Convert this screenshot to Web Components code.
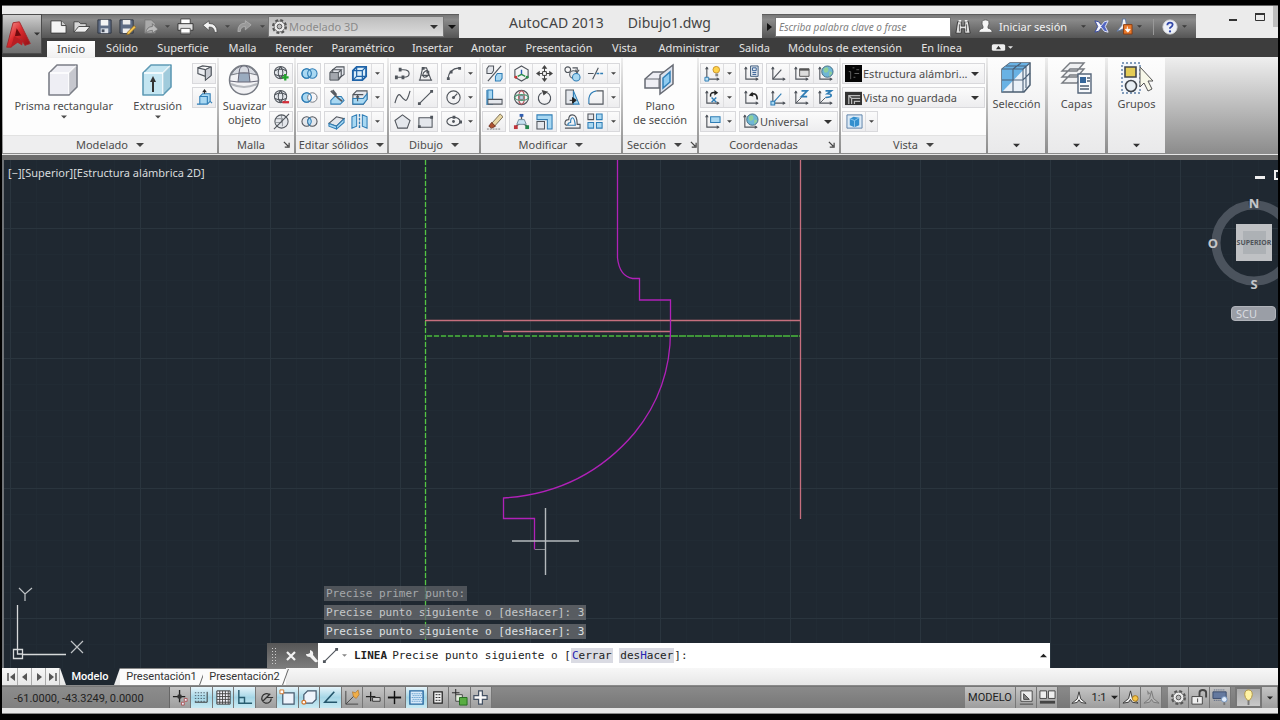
<!DOCTYPE html>
<html lang="es">
<head>
<meta charset="utf-8">
<title>AutoCAD 2013 - Dibujo1.dwg</title>
<style>
  html, body { margin: 0; height: 100%; background: #000; }
  body { font: 11px/14px "Noto Sans", "Open Sans", sans-serif; color: #4c4c4c; overflow: hidden; }
</style>
</head>
<body>
<cad-app></cad-app>
<script>
const K = 'fill="none" stroke="#50555c" stroke-width="1.2"';
const B = 'fill="none" stroke="#2f7db5" stroke-width="1.2"';
const F = 'fill="#a9d8f2" stroke="#2f7db5" stroke-width="1.1"';
const G = 'fill="#e4e7ec" stroke="#50555c" stroke-width="1.1"';
const AXES = `<path d="M3 2v13h13" ${K}/><path d="M1 4.500l2-3 2 3zM13.500 13l3 2-3 2z" fill="#50555c"/>`;
const BALL = `<circle cx="8" cy="8" r="6.500" ${G}/><path d="M2 6q6-3 12 0M2 10q6 3 12 0M8 1.500q-5 6.500 0 13M8 1.500q5 6.500 0 13" ${K}/>`;
const GLOBE = `<circle cx="11" cy="7" r="6" fill="#6fb6d6" stroke="#406a80"/><path d="M7 4q4-3 5 0t-2 4q-3 1-3-4zM13 7q3-1 3 2l-3 3z" fill="#8fcf9a"/>`;
const CUBE = (s, f) => `<path d="M2 10l8-8h20v22l-8 8H2z" fill="${f}" stroke="${s}" stroke-width="1.6" stroke-linejoin="round"/><path d="M3 10h19v21M22 10l7-7" fill="none" stroke="#fff" stroke-width="1.500"/><path d="M22 10l8-8v22l-8 8z" fill="${s}" opacity=".35"/>`;
const LAYOUT_A = '<path d="M8 1l2 8 6 5-6-1-2-3-2 3-6 1 6-5z" transform="translate(1 1)"';

/* Drawings keyed by name: [viewBox size, markup]. */
const ICONS = {
  caret: [8, '<path d="M0 2h8l-4 4z" fill="currentColor"/>'],
  up: [8, '<path d="M0 6h8l-4-4z" fill="currentColor"/>'],
  right: [8, '<path d="M2 0l5 4-5 4z" fill="currentColor"/>'],
  launcher: [8, '<path d="M1 1l5 5M7 2v5h-5" fill="none" stroke="currentColor" stroke-width="1.4"/>'],
  logo: [32, '<defs><linearGradient id="r" x1="0" y1="0" x2="1" y2="1"><stop stop-color="#f79a96"/><stop offset=".45" stop-color="#dc2b2e"/><stop offset="1" stop-color="#8d0d12"/></linearGradient></defs><path d="M3 30L10 3l7-1 12 24-6 2-4-7-9 3-2 6z" fill="url(#r)" stroke="#a3282b"/><path d="M12 18l2-9 5 8z" fill="#6e0b0e"/><path d="M8 30l3-12 10 5-1 5-5-3z" fill="#b81d22"/>'],
  new: [18, '<path d="M1 3h11l5 5v8H1z" fill="#f4f4f4" stroke="#3d3d3d"/><path d="M12 3v5h5" fill="#ccc" stroke="#3d3d3d"/>'],
  open: [18, '<path d="M1 15V4h5l2 2h6v3" fill="#d7d7d7" stroke="#444"/><path d="M1 15l5-6h12l-5 6z" fill="#eee" stroke="#444"/>'],
  save: [18, '<path d="M2 2h14v14H2z" fill="#5f6d85" stroke="#2f3542"/><path d="M5 2h8v6H5z" fill="#f4f4f4"/><path d="M5 11h8v5H5z" fill="#dfe3ea"/><path d="M6 12h3v3H6z" fill="#454c5a"/>'],
  saveas: [18, '<path d="M1 2h14v14H1z" fill="#5f6d85" stroke="#2f3542"/><path d="M4 2h8v5H4zM4 11h8v5H4z" fill="#eee"/><path d="M9 15l7-7 2 2-7 7-3 1z" fill="#f2c14e" stroke="#7a5a20" stroke-width=".7"/>'],
  export: [18, '<path d="M3 2h7l4 4v10H3z" fill="#aaa" stroke="#777"/><path d="M4 16q1-7 7-7V6l6 6-6 4v-3q-4 0-7 3z" fill="#bbb" stroke="#777"/>'],
  print: [18, '<path d="M4 1h10v6H4zM4 11h10v6H4z" fill="#fff" stroke="#444"/><path d="M1 6h16v7H1z" fill="#e1e1e1" stroke="#333"/><path d="M4 11h10v5H4z" fill="#fff" stroke="#555"/>'],
  undo: [18, '<path d="M1 7l7-5v3q9 0 9 10h-3q0-6-6-6v4z" fill="#f2f2f2" stroke="#444" stroke-width=".8"/>'],
  redo: [18, '<path d="M17 7l-7-5v3Q1 5 1 15h3q0-6 6-6v4z" fill="#999" stroke="#bbb" stroke-width=".8"/>'],
  gear: [18, '<circle cx="9" cy="9" r="6.700" fill="none" stroke="#555" stroke-width="2.500" stroke-dasharray="3 2.260"/><circle cx="9" cy="9" r="5.700" fill="#ececec" stroke="#666"/><circle cx="9" cy="9" r="2.500" fill="#bbb" stroke="#555"/>'],
  binoculars: [18, '<path d="M3 3h4v5h4V3h4l2 13h-6v-5H7v5H1z" fill="#e2e2e2" stroke="#333"/><path d="M4 2h3M11 2h3" stroke="#eee" stroke-width="2"/><path d="M5 6v8M13 6v8" stroke="#555"/>'],
  user: [18, '<path d="M1 16q0-4 5-5V9Q4 6 5 3q1-2 4-2t4 2q1 3-1 6v2q5 1 5 5z" fill="#f5f5f5" stroke="#555"/>'],
  exchange: [18, '<path d="M2 3l4 1 4 5-4 5-4 1 3-6z" fill="#f4f6ff" stroke="#33459c"/><path d="M16 3l-4 1-4 5 4 5 4 1-3-6z" fill="#5366c2" stroke="#e8ebff"/>'],
  apps: [18, '<path d="M7 1h3l1 6-4 5-6 2 5-6z" fill="#f2f2f2" stroke="#6078a5"/><path d="M8 7h9v10H8z" fill="#e9792b" stroke="#863c10"/><path d="M12 9v4M10 12l2.500 3 2.500-3z" fill="#fff" stroke="#fff"/>'],
  help: [18, '<circle cx="9" cy="9" r="8" fill="#eef1f8" stroke="#d9d9d9"/><path d="M6 7q0-3 3-3t3 2.500Q12 8 9 10v1" fill="none" stroke="#3147a8" stroke-width="2"/><circle cx="9" cy="14" r="1.300" fill="#3147a8"/>'],
  box: [34, CUBE('#7b7e87', '#eeeef4')],
  extrude: [34, CUBE('#5f9ab5', '#c4e5f1') + '<path d="M12 29V17" stroke="#333" stroke-width="2"/><path d="M9 19l3-6 3 6z" fill="#333"/>'],
  smooth: [34, '<circle cx="16" cy="17" r="14.500" fill="#f1f1f4" stroke="#777b84" stroke-width="1.500"/><path d="M3 12q5-9 13-9t13 9q-13-4-26 0" fill="#d8dbe2" stroke="#777b84"/><path d="M11 10h10l1 9H10z" fill="#9aabbf" stroke="#667"/><path d="M10 19l-8-1M22 19l8-1M11 10q0-5 3-7M21 10q0-5-3-7" fill="none" stroke="#667"/><path d="M3 21q13 6 26 0" fill="none" stroke="#b4b7bd" stroke-width="2"/>'],
  section: [34, '<path d="M2 16l8-7h12v16H2z" fill="#eeeef4" stroke="#666a73" stroke-width="1.500"/><path d="M2 16h14v9M16 16l6-7" fill="none" stroke="#666a73"/><path d="M17 12l13-10v19L17 31z" fill="#dde3ee" stroke="#666a73" stroke-width="1.500"/><path d="M20 15l7-6v10l-7 6z" fill="#8fcbf0" stroke="#3180b8" stroke-width="1.500"/>'],
  polysolid: [18, '<path d="M2 3l8 2v7l-8-3z" fill="#eceef2" stroke="#50555c" stroke-width="1.200"/><path d="M2 3l5-2 9 1v9l-6 5v-4M10 5l6-3M10 5v11" fill="none" stroke="#50555c" stroke-width="1.200"/><path d="M10 5l6-3v9l-6 5z" fill="#c9ccd3" stroke="#50555c"/>'],
  presspull: [18, `<path d="M4 8l3-3h8v8l-3 3H4z" ${F}/><path d="M4 8h8v8M1 16h3M15 13l2 2" ${B}/><path d="M9 5V2" stroke="#222"/><path d="M6.500 3.500L9 0l2.500 3.500z" fill="#222"/>`],
  meshadd: [18, BALL + '<path d="M13 9.500v7M9.500 13h7" stroke="#22a32c" stroke-width="2.400"/>'],
  meshdel: [18, BALL + '<path d="M10 14h7" stroke="#d32c38" stroke-width="2.400"/>'],
  meshno: [18, `<circle cx="9" cy="9" r="7" ${G}/><path d="M3 6h7v8M9 2v8H3" ${K} opacity=".5"/><path d="M1 17L17 1" ${K}/>`],
  union: [18, `<circle cx="6" cy="9" r="5" ${F}/><circle cx="12" cy="9" r="5" ${F}/><circle cx="6" cy="9" r="5" ${B}/>`],
  subtract: [18, `<circle cx="6" cy="9" r="5" ${F}/><circle cx="12" cy="9" r="5" fill="#f5f5f8" stroke="#70757d"/><circle cx="6" cy="9" r="5" ${B}/>`],
  intersect: [18, `<circle cx="6" cy="9" r="5" ${G}/><circle cx="12" cy="9" r="5" ${G}/><path d="M9 5q-4 4 0 8q4-4 0-8" ${F}/>`],
  imprint: [18, `<path d="M5 5l4-3h8v8l-4 3H5z" ${G}/><path d="M2 8h9v8H2z" fill="#a3a7ae" stroke="#50555c"/><path d="M2 8l3-3h9l-3 3M14 5v7l-3 4" ${K}/>`],
  edges: [18, '<path d="M2 6l4-4h10v10l-4 4H2z" fill="#dbeefa" stroke="#1f63a8" stroke-width="2"/><path d="M2 6h10v10M12 6l4-4M6 2v10h10M6 12l-4 4" fill="none" stroke="#1f63a8" stroke-width="1.300"/>'],
  slice: [18, `<path d="M3 12l4-4h7l3 4-4 4H3z" ${F}/><path d="M3 2l8 8M5 1l4 5M11 10l4 3" stroke="#565a61" stroke-width="1.800"/>`],
  thicken: [18, `<path d="M2 6l4-4h11v9l-4 5H2z" ${G}/><path d="M2 10h11l4-5v6l-4 5H2z" ${F}/><path d="M2 6h11M7 8v5M5.500 9l1.500-2 1.500 2" ${K}/>`],
  face: [18, `<path d="M1 11l8-7 8 2-8 8z" ${G}/><path d="M1 11l8 3v3l-8-3zM9 14l8-8v4l-8 7z" ${F}/>`],
  mirror3: [18, `<path d="M1 4l5-2v12l-5 2zM17 4l-5-2v12l5 2z" ${F}/><path d="M9 1v16" stroke="#2f7db5" stroke-width="1.500" stroke-dasharray="3 1"/>`],
  polyline: [18, `<path d="M2 13h8q6 0 6-4t-6-4H7" ${K} stroke-width="1.500"/><path d="M1 11h3v4H1zM8 11h3v4H8zM5 3h3v4H5z" fill="#50555c"/>`],
  presspoly: [18, `<path d="M2 16h14M3 16l3-13h4l5 13M5 11h8M7 8q4-4 5 0t-4 5q-3-1-1-5" ${K}/><path d="M5 2h3v3H5zM10 6h3v3h-3z" fill="#50555c"/>`],
  arc: [18, `<path d="M3 15Q4 4 15 3" ${K}/><path d="M2 13h3v3H2zM5 6h3v3H5zM14 2h3v3h-3z" fill="#50555c"/>`],
  spline: [18, `<path d="M1 15Q4 3 7 7t5 5 5-10" ${K} stroke-width="1.500"/>`],
  line: [18, `<path d="M3 15L15 3" ${K}/><path d="M1 14h3v3H1zM14 1h3v3h-3z" fill="#50555c"/>`],
  circle: [18, `<circle cx="9" cy="9" r="7" ${K}/><path d="M9 9l4-4" ${K}/><circle cx="9" cy="9" r="1.600" fill="#50555c"/>`],
  polygon: [18, `<path d="M9 2l8 6-3 8H4L1 8z" ${G}/>`],
  rect: [18, `<path d="M2 5h14v10H2z" ${G}/><path d="M1 13h3v3H1zM14 3h3v3h-3z" fill="#50555c"/>`],
  ellipse: [18, `<ellipse cx="9" cy="9" rx="7" ry="4.500" ${K}/><circle cx="9" cy="9" r="1.500" fill="#50555c"/><path d="M8 3h3v3H8zM15 8h3v3h-3z" fill="#50555c"/>`],
  modall: [18, `<path d="M3 1h5v5l-2 3H1V4z" ${G}/><path d="M2 17L16 1" ${K}/><path d="M12 9h5v5l-2 3h-5v-5z" ${F}/>`],
  move3: [18, `<path d="M9 1l7 4v8l-7 4-7-4V5z" ${K}/><path d="M9 10V5" stroke="#2c5fb8" stroke-width="1.500"/><path d="M9 10l-4 2M9 10l4 2" stroke="#2b8c4a" stroke-width="1.500"/><circle cx="3" cy="13" r="1.500" fill="#c33"/><circle cx="15" cy="13" r="1.500" fill="#2b8c4a"/>`],
  move: [18, '<path d="M9 3v12M3 9h12" stroke="#333"/><path d="M9 0l3 4H6zM9 18l3-4H6zM0 9l4-3v6zM18 9l-4-3v6z" fill="#444"/><path d="M7 7h4v4H7z" fill="#fff" stroke="#333"/>'],
  copy: [18, `<circle cx="4" cy="5" r="3" ${K}/><circle cx="10" cy="10" r="4" ${G}/><circle cx="13" cy="13" r="4" ${F}/><path d="M9 3h5v3M12 5l2 3 2-3" ${K}/>`],
  trim: [18, `<path d="M1 9h6M12 3L6 15" ${K}/><path d="M10 9h8" stroke="#2f7db5" stroke-width="1.500" stroke-dasharray="3 1"/>`],
  align: [18, `<path d="M2 1h5v15H2z" ${F}/><path d="M2 11h15v5H2z" ${G}/><path d="M1 1v16" ${B}/>`],
  rotate3: [18, `<circle cx="9" cy="9" r="7.500" ${K}/><ellipse cx="9" cy="9" rx="3" ry="7" fill="none" stroke="#b85e66" stroke-width="1.300"/><ellipse cx="9" cy="9" rx="7" ry="3" fill="none" stroke="#4f9a77" stroke-width="1.300"/><path d="M7 7h4v4H7z" fill="#b8d5e8" stroke="#777"/>`],
  rotate: [18, `<path d="M6 4a6.500 6.500 0 1 0 6 0" ${K} stroke-width="1.600"/><path d="M6 1l7 2-5 4z" fill="#444"/>`],
  mirror: [18, `<path d="M2 1h8v15H2z" ${G}/><path d="M10 2l6 14h-6z" ${F}/><path d="M6 12h5M9 9l4 3-4 3z" fill="#222" stroke="#222"/>`],
  fillet: [18, `<path d="M2 16V10Q3 3 10 2" ${B}/><path d="M10 2h7v14H2" ${K}/>`],
  erase: [18, '<path d="M1 17h15" stroke="#777" stroke-dasharray="2 1"/><path d="M6 11L15 1l3 3-9 10z" fill="#e9d8a6" stroke="#76684b"/><path d="M6 10l4 4-4 2-3-2z" fill="#ae5230" stroke="#733322"/>'],
  scale3: [18, '<path d="M9 2v8l-6 4M9 10l6 4" fill="none" stroke="#555" stroke-width="1.400"/><path d="M6 7h6l2 5H4z" fill="#c7e3f2" stroke="#718c9b"/><path d="M7 1h4v3H7z" fill="#315fb0"/><path d="M1 13h4v4H1z" fill="#bf343b"/><path d="M13 13h4v4h-4z" fill="#23864c"/>'],
  scale: [18, `<path d="M1 2h16v15h-5V7H1z" ${F}/><path d="M1 9h8v8H1z" ${G}/>`],
  offset: [18, `<path d="M1 16h16v-4h-3q0-10-5-10-4 0-4 5-4 0-4 4 0 2 3 2" ${K} stroke-width="1.500"/><path d="M4 13h8q-1-8-3-8t-2 5q-3 0-3 3" ${B} stroke-width="1.500"/>`],
  array: [18, `<path d="M1 1h6v6H1z" ${G}/><path d="M10 1h6v6h-6zM1 10h6v6H1zM10 10h6v6h-6z" ${F}/>`],
  ucslamp: [18, AXES + '<path d="M1 13h4v4H1z" fill="#bde2f5" stroke="#2f7db5"/><circle cx="13" cy="5" r="3.500" fill="#ffd34a" stroke="#c9932e"/><path d="M12 9h3v3h-3z" fill="#888"/>'],
  ucsx: [18, AXES + '<path d="M7 8q-1-5 5-4" fill="none" stroke="#222" stroke-width="1.600"/><path d="M11 1l4 3-4 3z" fill="#222"/><path d="M8 9l5 5M13 9l-5 5" stroke="#2f7db5" stroke-width="1.500"/>'],
  ucsview: [18, AXES + `<path d="M7 4h10v6H7z" ${F}/>`],
  ucslist: [18, AXES + '<path d="M8 1h8v11H8z" fill="#e3e9f1" stroke="#3c5878"/><path d="M10 3h4v3h-4zM10 8h4M10 10h4" fill="none" stroke="#315b92"/>'],
  ucs: [18, AXES + `<path d="M3 15l9-10" ${K}/>`],
  ucswin: [18, AXES + '<path d="M7 4h10v8H7z" fill="#ddd" stroke="#555"/><path d="M7 4h10v2H7z" fill="#555"/>'],
  ucsworld: [18, AXES + GLOBE],
  ucsback: [18, AXES + '<path d="M8 6q7-3 7 5" fill="none" stroke="#222" stroke-width="1.700"/><path d="M6 7l4-4 1 5z" fill="#222"/>'],
  ucsorigin: [18, AXES + `<path d="M3 15l9-10" ${B}/><path d="M1 13h4v4H1z" ${F}/>`],
  ucsz: [18, AXES + '<path d="M9 2h6l-6 6h6" fill="none" stroke="#2f7db5" stroke-width="1.800"/><path d="M3 15l6-6" stroke="#50555c"/>'],
  ucs3: [18, AXES + '<path d="M9 2h6l-4 3q4 0 4 2t-6 2" fill="none" stroke="#2f7db5" stroke-width="1.800"/><path d="M3 15l6-6" stroke="#50555c"/>'],
  wire: [18, '<path d="M0 0h18v18H0z" fill="#050505"/><path d="M8 3h2M4 7h2v8M10 9h5M9 13h2M12 5h3" fill="none" stroke="#666"/>'],
  views: [18, '<path d="M0 3h18v14H0z" fill="#333"/><path d="M4 16V7h12M7 16v-6h9M10 16v-3h6M4 7l3 3" fill="none" stroke="#bbb" stroke-width="1.300"/>'],
  viewcube: [18, '<path d="M1 2h16v14H1z" fill="#dceaf6" stroke="#5b7fa7"/><path d="M4 6l4-2 6 1v8l-5 2-5-2z" fill="#348fce"/><path d="M4 6l5 2v7M9 8l5-3" fill="none" stroke="#8cc8ee"/>'],
  selection: [34, '<path d="M2 8l8-6h20v22l-6 7H2z" fill="#eaf1f8" stroke="#4b5d70" stroke-width="1.500"/><path d="M2 8l8-6h20L2 31z" fill="#69b2e4"/><path d="M2 8h21v23M23 8l7-6M13 8v23M2 19h21l7-7M13 8l8-6M6 5h20v22" fill="none" stroke="#4b6178" stroke-width="1.100"/>'],
  layers: [34, '<path d="M2 22h15l7-8H10zM2 16h15l7-8H10zM2 10h15l7-8H10z" fill="#f0f1f3" stroke="#777b81" stroke-width="1.400"/><path d="M18 13h13v19H18z" fill="#f7f9fc" stroke="#556579" stroke-width="1.400"/><path d="M20 16h6v6h-6z" fill="#34659a"/><path d="M27 17h3M27 20h3M20 25h9M20 28h9" stroke="#4d5d72" stroke-width="1.400"/>'],
  groups: [34, '<path d="M2 2h18v30H2z" fill="#f2f6fb" stroke="#5c7ea5" stroke-width="1.400" stroke-dasharray="2 2"/><path d="M5 6h11v10H5z" fill="#e4cc55" stroke="#40454c" stroke-width="1.600"/><circle cx="11" cy="25" r="5.500" fill="#e6edf3" stroke="#40454c" stroke-width="1.600"/><path d="M20 6v20l4-4 4 8 4-2-4-8h5z" fill="#f7f8e9" stroke="#555"/>'],
  first: [12, '<path d="M3 2v8" stroke="#555" stroke-width="1.500"/><path d="M10 2v8L5 6z" fill="#555"/>'],
  prev: [12, '<path d="M8 2v8L3 6z" fill="#555"/>'],
  next: [12, '<path d="M4 2v8l5-4z" fill="#555"/>'],
  last: [12, '<path d="M9 2v8" stroke="#555" stroke-width="1.500"/><path d="M2 2v8l5-4z" fill="#555"/>'],
  close: [12, '<path d="M2 2l8 8M10 2l-8 8" stroke="#f2f2f2" stroke-width="2.200"/>'],
  wrench: [14, '<path d="M1 5q0 3 4 3l5 5q2 1 3-1L8 6q1-4-3-5v3L3 5z" fill="#f2f2f2"/>'],
  infer: [18, '<path d="M1 8h13M8 1v13" stroke="#222" stroke-width="1.400"/><circle cx="8" cy="8" r="2.500" fill="#333"/><path d="M13 10h3v3h-3zM10 14h3v3h-3z" fill="#eef" stroke="#a55"/>'],
  snap: [18, '<path d="M2 4h11M2 7h11M2 10h11M2 13h11" stroke="#4a5c68" stroke-dasharray="1.500 1.500"/><path d="M15 3v11H2" fill="none" stroke="#333"/>'],
  grid: [18, '<path d="M2 2h14v14H2z" fill="#f8f8ff" stroke="#333"/><path d="M5 2v14M8 2v14M11 2v14M14 2v14M2 5h14M2 8h14M2 11h14M2 14h14" stroke="#444"/>'],
  ortho: [18, '<path d="M3 1v14h14M3 9h6v6" fill="none" stroke="#285d70" stroke-width="1.500"/>'],
  polar: [18, '<path d="M12 6a5 5 0 1 0 2 4M5 13l8-8M9 9h7" fill="none" stroke="#333" stroke-width="1.300"/>'],
  osnap: [18, '<path d="M4 4h12v12H4z" fill="#eef3fb" stroke="#44596e" stroke-width="1.300"/><path d="M1 1h4v4H1z" fill="#fff" stroke="#d0762f"/>'],
  osnap3: [18, '<path d="M3 6l4-4h9v9l-4 4H3z" fill="#eef3fb" stroke="#44596e" stroke-width="1.300"/><circle cx="3" cy="14" r="2" fill="#fff" stroke="#d0762f" stroke-width="1.300"/>'],
  otrack: [18, '<path d="M13 3L3 14h13" fill="none" stroke="#24566c" stroke-width="1.700"/>'],
  ducs: [18, '<path d="M3 2v14h13M3 16L12 7" fill="none" stroke="#444"/><path d="M10 3l3 1 3-3 1 5-3 4-3-2z" fill="#f0ae49" stroke="#a86b20" stroke-width=".6"/>'],
  dyn: [18, '<path d="M1 8h10M6 3v10" stroke="#222" stroke-width="1.400"/><path d="M8 9h8v4H8z" fill="#ccc" stroke="#333"/>'],
  lwt: [18, '<path d="M2 9h14" stroke="#111" stroke-width="2"/><path d="M9 2v14" stroke="#111" stroke-width="1.500"/>'],
  transp: [18, '<path d="M2 2h14v14H2z" fill="#d8eafa" stroke="#2768a0" stroke-width="1.500"/><path d="M4 5h11M5 7h10M4 9h11M5 11h10M4 13h11" stroke="#3c84bd" stroke-dasharray="1 1"/>'],
  quick: [18, '<path d="M5 3h9v12H5z" fill="#eee" stroke="#222" stroke-width="1.300"/><path d="M7 6h5M7 9h5M7 12h5" stroke="#222" stroke-dasharray="2 1"/>'],
  cycle: [18, '<path d="M1 4h8M5 0v8" stroke="#222"/><path d="M5 6h7v7H5z" fill="#dfead9" stroke="#444"/><path d="M9 9h8v8H9z" fill="#59ad42" stroke="#246c20"/>'],
  plus: [18, '<path d="M7 2h4v5h5v4h-5v5H7v-5H2V7h5z" fill="#fafafa" stroke="#445264" stroke-width="1.300"/>'],
  model: [18, '<path d="M3 2h12v11H3z" fill="#eee" stroke="#444"/><path d="M6 5v6h6zM2 16h14" fill="#888" stroke="#444"/>'],
  layouts: [18, '<path d="M1 2h7v8H1zM10 2h7v8h-7z" fill="#eee" stroke="#444"/><path d="M1 14h16" stroke="#444" stroke-width="3"/>'],
  anno: [18, LAYOUT_A + ' fill="#f3f3f3" stroke="#333"/>'],
  annolamp: [18, LAYOUT_A + ' fill="#f3f3f3" stroke="#333"/><circle cx="14" cy="10" r="3" fill="#f6c548" stroke="#a37722"/>'],
  annoauto: [18, LAYOUT_A + ' fill="#b5b5b5" stroke="#777"/><path d="M4 1l4 4-3 1z" fill="#888"/>'],
  lock: [18, '<path d="M1 8h11v8H1z" fill="#efefef" stroke="#444"/><path d="M9 8V4q0-3 3.500-3T16 4v5" fill="none" stroke="#444" stroke-width="2"/><path d="M7 10v4" stroke="#444"/>'],
  hardware: [18, '<path d="M1 3h14v7H1z" fill="#64799f" stroke="#394a6b"/><path d="M2 12h9M2 1h12" stroke="#48597b" stroke-dasharray="1 1"/><circle cx="13" cy="11" r="3" fill="#dfecfc" stroke="#6b8cb8"/><path d="M12 14h2v3h-2z" fill="#777"/>'],
  bulb: [18, '<path d="M5 6q0-5 4-5t4 5q0 3-3 6H8Q5 9 5 6z" fill="#fff3a4" stroke="#b19643"/><path d="M8 12h2v5H8z" fill="#777"/>'],
  ribbonmin: [18, '<path d="M3 5h12q2 0 2 2v4q0 2-2 2H3q-2 0-2-2V7q0-2 2-2z" fill="#eee"/><path d="M6 11l3-4 3 4z" fill="#333"/>']
};

const icon = (name, size) => {
  const [box, body] = ICONS[name];
  return `<svg width="${size || box}" height="${size || box}" viewBox="0 0 ${box} ${box}" aria-hidden="true">${body}</svg>`;
};

const BASE = `
  :host, *, *::before, *::after { box-sizing: border-box; }
  svg { display: block; flex: none; }
  button, select, input { font: inherit; color: inherit; margin: 0; padding: 0; border: 0; background: none; border-radius: 0; outline: 0; }
  button { display: flex; align-items: center; justify-content: center; }
  select { appearance: none; }
`;

class CadElement extends HTMLElement {
  connectedCallback() {
    if (this.shadowRoot) return;
    this.attachShadow({ mode: 'open' }).innerHTML = `<style>${BASE}${this.css()}</style>${this.html()}`;
  }
  attr(name, fallback = '') { return this.getAttribute(name) || fallback; }
}
const define = (tag, css, html) => customElements.define(tag, class extends CadElement {
  css() { return css; }
  html() { return html(this); }
});

define('tool-group', `
  :host { display: flex; flex: none; height: 21px; border: 1px solid #d9d9dc; background: linear-gradient(#fbfbfb, #ededef); }
  button { width: 24px; }
  button:first-of-type { width: 22px; }
  button + button { border-left: 1px solid #dedee0; }
  button.drop { width: 12px; color: #444; }
`, el => el.attr('icons').split(' ').map(n => n === '+'
  ? `<button class="drop" aria-label="Más opciones">${icon('caret', 5)}</button>`
  : `<button aria-label="${n}">${icon(n, 17)}</button>`).join(''));

define('cad-select', `
  :host { display: flex; align-items: center; flex: 1; min-width: 0; height: 21px; padding: 0 5px 0 2px; border: 1px solid #d9d9dc; background: linear-gradient(#fbfbfb, #ededef); }
  :host([large]) { height: 21px; flex: none; width: 176px; color: #8a8a8a; background: linear-gradient(#bdbdbd, #dcdcdc); border-color: #777; }
  select { flex: 1; min-width: 0; height: 100%; padding-left: 1px; text-overflow: ellipsis; }
  .caret { color: #333; }
`, el => `${icon(el.attr('icon'), 17)}<select aria-label="${el.attr('label')}"><option>${el.attr('value')}</option></select><span class="caret">${icon('caret', 8)}</span>`);

define('big-tool', `
  :host { display: block; width: var(--tool-width); }
  button { width: 100%; flex-direction: column; line-height: 14px; }
  .label { margin-top: 2px; display: block; white-space: pre-line; }
  .caret { margin-top: 1px; }
`, el => `<button>${icon(el.attr('icon'), 34)}<span class="label">${el.attr('label').replace('|', '<br>')}</span>${el.hasAttribute('drop') ? `<span class="caret">${icon('caret', 6)}</span>` : ''}</button>`);

define('ribbon-panel', `
  :host { display: flex; flex-direction: column; flex: none; width: var(--panel-width); background: #fdfdfd; }
  .body { flex: 1; display: flex; padding: 5px 1px 0; min-height: 0; }
  .foot { display: flex; align-items: center; justify-content: center; height: 18px; background: #eeeeef; border-top: 1px solid #e2e2e2; color: #4c4c4c; gap: 8px; }
  .foot button { color: #444; height: 16px; }
  .launch { margin-left: auto; margin-right: 4px; }
  .foot.both { justify-content: flex-start; padding-left: 4px; }
  .foot.launchonly { padding-left: 8px; }
  .foot.launchonly .title { margin-left: auto; }
`, el => {
  const menu = el.hasAttribute('menu'), launch = el.hasAttribute('launcher');
  return `<div class="body"><slot></slot></div><div class="foot ${menu && launch ? 'both' : launch ? 'launchonly' : ''}"><span class="title">${el.attr('label')}</span>${menu ? `<button aria-label="Desplegar ${el.attr('label')}">${icon('caret', 8)}</button>` : ''}${launch ? `<button class="launch" aria-label="Opciones de ${el.attr('label')}">${icon('launcher', 7)}</button>` : ''}</div>`;
});

define('folded-panel', `
  :host { display: flex; flex: none; width: 57px; background: linear-gradient(#fdfdfd, #e9e9ea); }
  button { flex: 1; flex-direction: column; justify-content: flex-start; padding-top: 3px; }
  .label { margin-top: 2px; }
  .caret { margin-top: 31px; color: #333; }
`, el => `<button>${icon(el.attr('icon'), 34)}<span class="label">${el.attr('label')}</span><span class="caret">${icon('caret', 7)}</span></button>`);

define('tool-column', `
  :host { display: flex; flex-direction: column; gap: 3px; flex: none; }
  :host([wide]) { flex: 1; }
  ::slotted(div) { display: flex; gap: 3px; }
`, () => '<slot></slot>');

define('cad-ribbon', `
  :host { display: flex; gap: 2px; height: 98px; padding: 1px 0 1px 1px; background: linear-gradient(#efefef, #8b8b8b); border-bottom: 1px solid #e6e6e6; }
  .folded { display: flex; gap: 3px; }
`, () => `
  <ribbon-panel label="Modelado" menu style="--panel-width:214px">
    <big-tool icon="box" label="Prisma rectangular" drop style="--tool-width:120px"></big-tool>
    <big-tool icon="extrude" label="Extrusión" drop style="--tool-width:69px"></big-tool>
    <tool-column><tool-group icons="polysolid"></tool-group><tool-group icons="presspull"></tool-group></tool-column>
  </ribbon-panel>
  <ribbon-panel label="Malla" launcher style="--panel-width:75px">
    <big-tool icon="smooth" label="Suavizar|objeto" style="--tool-width:49px"></big-tool>
    <tool-column><tool-group icons="meshadd"></tool-group><tool-group icons="meshdel"></tool-group><tool-group icons="meshno"></tool-group></tool-column>
  </ribbon-panel>
  <ribbon-panel label="Editar sólidos" menu style="--panel-width:91px">
    <tool-column>
      <div><tool-group icons="union"></tool-group><tool-group icons="imprint edges +"></tool-group></div>
      <div><tool-group icons="subtract"></tool-group><tool-group icons="slice thicken +"></tool-group></div>
      <div><tool-group icons="intersect"></tool-group><tool-group icons="face mirror3 +"></tool-group></div>
    </tool-column>
  </ribbon-panel>
  <ribbon-panel label="Dibujo" menu style="--panel-width:90px">
    <tool-column>
      <div><tool-group icons="polyline presspoly"></tool-group><tool-group icons="arc +"></tool-group></div>
      <div><tool-group icons="spline line"></tool-group><tool-group icons="circle +"></tool-group></div>
      <div><tool-group icons="polygon rect"></tool-group><tool-group icons="ellipse +"></tool-group></div>
    </tool-column>
  </ribbon-panel>
  <ribbon-panel label="Modificar" menu style="--panel-width:140px">
    <tool-column>
      <div><tool-group icons="modall"></tool-group><tool-group icons="move3 move"></tool-group><tool-group icons="copy trim +"></tool-group></div>
      <div><tool-group icons="align"></tool-group><tool-group icons="rotate3 rotate"></tool-group><tool-group icons="mirror fillet +"></tool-group></div>
      <div><tool-group icons="erase"></tool-group><tool-group icons="scale3 scale"></tool-group><tool-group icons="offset array +"></tool-group></div>
    </tool-column>
  </ribbon-panel>
  <ribbon-panel label="Sección" menu launcher style="--panel-width:74px">
    <big-tool icon="section" label="Plano|de sección" style="--tool-width:72px"></big-tool>
  </ribbon-panel>
  <ribbon-panel label="Coordenadas" launcher style="--panel-width:140px">
    <tool-column>
      <div><tool-group icons="ucslamp +"></tool-group><tool-group icons="ucslist"></tool-group><tool-group icons="ucs ucswin ucsworld"></tool-group></div>
      <div><tool-group icons="ucsx +"></tool-group><tool-group icons="ucsback"></tool-group><tool-group icons="ucsorigin ucsz ucs3"></tool-group></div>
      <div><tool-group icons="ucsview +"></tool-group><cad-select icon="ucsworld" label="SCP" value="Universal"></cad-select></div>
    </tool-column>
  </ribbon-panel>
  <ribbon-panel label="Vista" menu style="--panel-width:145px">
    <tool-column wide>
      <div><cad-select icon="wire" label="Estilo visual" value="Estructura alámbri..."></cad-select></div>
      <div><cad-select icon="views" label="Vista" value="Vista no guardada"></cad-select></div>
      <div><tool-group icons="viewcube +"></tool-group></div>
    </tool-column>
  </ribbon-panel>
  <div class="folded">
    <folded-panel icon="selection" label="Selección"></folded-panel>
    <folded-panel icon="layers" label="Capas"></folded-panel>
    <folded-panel icon="groups" label="Grupos"></folded-panel>
  </div>
`);

define('title-bar', `
  :host { display: flex; height: 32px; background: #ebebeb; color: #333; padding-left: 40px; }
  .bar { display: flex; align-items: center; flex: none; margin-top: 8px; background: linear-gradient(#777, #8a8a8a 20%, #555); border-top: 1px solid #5d5d5d; }
  .quick { width: 417px; padding-left: 5px; }
  .quick > button { width: 23px; height: 20px; }
  .quick > .drop { width: 12px; color: #444; }
  .quick > .wide { width: 25px; }
  .quick cad-select { margin-left: auto; }
  .quick > .custom { width: 15px; color: #111; }
  h1 { flex: 1; margin: 0; display: flex; gap: 24px; padding: 7px 0 0 50px; font-size: 14px; line-height: 20px; font-weight: 400; color: #444; white-space: nowrap; }
  .info { width: 434px; color: #f1f1f1; }
  .info .expand { width: 13px; color: #111; }
  input { width: 176px; height: 20px; background: #fff; border: 1px solid #777; padding: 1px 3px 0; font-size: 10px; font-style: italic; color: #333; }
  input::placeholder { color: #808080; opacity: 1; }
  .info button { flex: none; height: 20px; }
  .find { width: 24px; }
  .user { gap: 6px; margin-left: 3px; }
  .info .drop { width: 12px; color: #3a3a3a; }
  .info .account { margin-left: 10px; }
  .info .exchange { margin: 0 6px 0 4px; }
  .sep { width: 1px; height: 16px; background: #999; margin: 0 8px; }
  .win { display: flex; width: 82px; flex: none; justify-content: flex-end; align-items: flex-start; }
  .win button { width: 27px; height: 22px; color: #333; }
  .win .shut { width: 5px; height: 21px; background: #bdbdbd; }
`, () => `
  <div class="bar quick">
    ${['new', 'open', 'save', 'saveas', 'export'].map(n => `<button aria-label="${n}">${icon(n, 17)}</button>`).join('')}
    <button class="drop" aria-label="Opciones">${icon('caret', 5)}</button>
    <button class="wide" aria-label="Imprimir">${icon('print', 17)}</button>
    <button aria-label="Deshacer">${icon('undo', 16)}</button><button class="drop" aria-label="Historial">${icon('caret', 5)}</button>
    <button aria-label="Rehacer">${icon('redo', 15)}</button><button class="drop" aria-label="Historial">${icon('caret', 5)}</button>
    <cad-select large icon="gear" label="Espacio de trabajo" value="Modelado 3D"></cad-select>
    <button class="custom" aria-label="Personalizar">${icon('caret', 8)}</button>
  </div>
  <h1><span>AutoCAD 2013</span><span>Dibujo1.dwg</span></h1>
  <div class="bar info">
    <button class="expand" aria-label="Contraer">${icon('right', 8)}</button>
    <input type="search" aria-label="Buscar" placeholder="Escriba palabra clave o frase">
    <button class="find" aria-label="Buscar">${icon('binoculars', 16)}</button>
    <button class="user">${icon('user', 15)}<span>Iniciar sesión</span></button>
    <button class="drop account" aria-label="Sesión">${icon('caret', 5)}</button>
    <button class="exchange" aria-label="Exchange">${icon('exchange', 17)}</button>
    <button aria-label="Aplicaciones">${icon('apps', 17)}</button>
    <button class="drop" aria-label="Aplicaciones">${icon('caret', 5)}</button>
    <span class="sep"></span>
    <button aria-label="Ayuda">${icon('help', 16)}</button>
    <button class="drop" aria-label="Ayuda">${icon('caret', 5)}</button>
  </div>
  <div class="win">
    <button aria-label="Minimizar"><svg width="8" height="12"><path d="M0 8h8v2H0z" fill="#333"/></svg></button>
    <button aria-label="Maximizar"><svg width="10" height="8"><path d="M0.500 1h9v6.500h-9z" fill="none" stroke="#333"/><path d="M0 0h10v2H0z" fill="#333"/></svg></button>
    <button class="shut" aria-label="Cerrar"></button>
  </div>
`);

define('app-button', `
  :host { position: absolute; left: 0; top: 8px; width: 40px; height: 40px; z-index: 2; }
  button { width: 100%; height: 100%; gap: 1px; border: 1px solid #4c4c4c; background: linear-gradient(#cfcfcf, #8e8e8e 55%, #6f6f6f); color: #333; }
`, () => `<button aria-label="Menú de la aplicación">${icon('logo', 29)}${icon('caret', 6)}</button>`);

define('menu-tabs', `
  :host { display: grid; grid-template-columns: 53px 50px 72px 47px 56px 82px 57px 55px 86px 45px 84px 47px 134px 59px auto; height: 19px; padding-left: 42px; background: #3d3d3d; color: #e4e4e4; }
  button { white-space: nowrap; height: 19px; }
  .on { margin: 3px 2px 0 3px; height: 16px; background: linear-gradient(#fff, #f1f1f1); color: #444; }
  .tail { justify-self: start; display: flex; margin-left: 20px; gap: 2px; }
`, () => ['Inicio', 'Sólido', 'Superficie', 'Malla', 'Render', 'Paramétrico', 'Insertar', 'Anotar', 'Presentación', 'Vista', 'Administrar', 'Salida', 'Módulos de extensión', 'En línea']
  .map((t, i) => `<button role="tab" class="${i ? '' : 'on'}">${t}</button>`).join('') +
  `<span class="tail"><button aria-label="Minimizar cinta">${icon('ribbonmin', 15)}</button><button aria-label="Opciones de cinta">${icon('caret', 5)}</button></span>`);

define('drawing-view', `
  :host { display: block; position: relative; overflow: hidden; background: #1f2831; border-left: 2px solid #6f7377; }
  .model { position: absolute; top: 0; left: -4px; width: calc(100% + 4px); height: 100%; }
  .controls { position: absolute; left: 4px; top: 6px; display: flex; color: #d9dcde; }
  .winctl { position: absolute; right: 0; top: 9px; width: 23px; height: 12px; overflow: hidden; }
  .cube { position: absolute; right: 0; top: 34px; width: 76px; height: 100px; overflow: hidden; }
  .scu { position: absolute; right: 2px; top: 146px; width: 45px; height: 15px; border-radius: 4px; background: #9a9ea6; color: #d9dbe0; justify-content: flex-start; padding-left: 4px; border: 1px solid #b0b3ba; }
  text { font-family: "Noto Sans", sans-serif; font-weight: 700; }
  ::slotted(command-line) { position: absolute; left: 263px; right: 228px; bottom: 0; }
`, () => `
  <svg class="model" role="img" aria-label="Perfil dibujado">
    <defs>
      <pattern id="minor" width="26" height="26" patternUnits="userSpaceOnUse" x="10" y="16"><path d="M.5 0v26M0 .5h26" stroke="#212b34" fill="none"/></pattern>
      <pattern id="major" width="130" height="130" patternUnits="userSpaceOnUse" x="10" y="68"><path d="M.5 0v130M0 .5h130" stroke="#2a353e" fill="none"/></pattern>
    </defs>
    <rect width="100%" height="100%" fill="url(#minor)"/><rect width="100%" height="100%" fill="url(#major)"/>
    <g transform="translate(0 -160)" fill="none">
      <path d="M425.500 160v480M425.500 336h375" stroke="#174d20" stroke-width="1"/>
      <path d="M425.500 160v480" stroke="#55c445" stroke-width="1.300" stroke-dasharray="5 2"/>
      <path d="M427 336h244" stroke="#4cb43f" stroke-width="1.300" stroke-dasharray="5 2"/><path d="M671 336h130" stroke="#4cb43f" stroke-width="1.300" stroke-dasharray="7 1"/>
      <path d="M425 320.500h376M503 331.500h168M800.500 160v359" stroke="#c66f7e" stroke-width="1.300"/>
      <path d="M617.500 160v98q2 18 15 20.500h7v21.500h31v31q0 58-36 102-51 60-131 65v20.500h31v31" stroke="#b021b8" stroke-width="1.300"/>
      <path d="M535 549.500h11" stroke="#81868b"/>
      <path d="M512 541h67M545.500 508v67" stroke="#b4b9bc" stroke-width="1.400"/>
      <path d="M17.500 605v44M22 654.500h44M13.500 649.500h9v9h-9zM17.500 649v5h5" stroke="#d6d9da" stroke-width="1.300"/>
      <path d="M19 588l6 6 7-6M25 594v7M71 641l12 12M83 641l-12 12" stroke="#bfc3c6" stroke-width="1.200"/>
    </g>
  </svg>
  <div class="controls"><button>[−]</button><button>[Superior]</button><button>[Estructura alámbrica 2D]</button></div>
  <svg class="winctl" aria-hidden="true"><path d="M0 7h10v3H0z" fill="#eee"/><path d="M20 2h10v8H20z" fill="none" stroke="#eee" stroke-width="2"/></svg>
  <svg class="cube" role="img" aria-label="ViewCube">
    <circle cx="52" cy="49" r="38" fill="none" stroke="#4b535d" stroke-width="9"/>
    <path d="M34 30h36v37H34z" fill="#bfc1c4"/><path d="M41 37h23v23H41z" fill="#adb1b5"/>
    <circle cx="52" cy="9" r="6" fill="#1f2831" opacity=".3"/>
    <text x="52" y="14" font-size="13" text-anchor="middle" fill="#c4c6c9">N</text>
    <text x="52" y="95" font-size="13" text-anchor="middle" fill="#c4c6c9">S</text>
    <text x="11" y="54" font-size="13" text-anchor="middle" fill="#c4c6c9">O</text>
    <text x="52" y="51" font-size="7" text-anchor="middle" fill="#50545a">SUPERIOR</text>
  </svg>
  <button class="scu">SCU</button>
  <slot></slot>
`);

define('command-line', `
  :host { display: block; font: 11px/15px "DejaVu Sans Mono", "Liberation Mono", monospace; color: #222; }
  .log { display: flex; flex-direction: column; align-items: flex-start; gap: 4px; padding: 0 0 4px 57px; margin: 0; list-style: none; color: #dfe1e3; }
  .log li { padding: 0 2px; background: rgba(105, 108, 112, .78); white-space: pre; }
  .log li:nth-child(1) { color: #a5a8ab; background: rgba(92, 96, 101, .78); }
  .log li:nth-child(2) { color: #c5c8ca; }
  .prompt { display: flex; align-items: center; height: 25px; background: #fff; white-space: pre; }
  .grip { display: flex; align-items: center; align-self: stretch; width: 51px; padding-left: 4px; gap: 8px; background: linear-gradient(#565656, #7d7d7d); flex: none; }
  .dots { width: 6px; height: 18px; background: radial-gradient(circle, #ccc 1px, transparent 1px) 0 0/3px 3px; flex: none; }
  .recent { gap: 3px; color: #888; margin: 0 7px 0 4px; }
  b { margin-right: 5px; }
  .opt { background: #dadbe3; display: inline; padding: 0 1px; }
  .opt i { font-style: normal; color: #2926b0; }
  input { flex: 1; min-width: 0; height: 22px; }
  .more { width: 14px; height: 25px; color: #222; }
`, () => `
  <ul class="log"><li>Precise primer punto:</li><li>Precise punto siguiente o [desHacer]: 3</li><li>Precise punto siguiente o [desHacer]: 3</li></ul>
  <div class="prompt">
    <span class="grip"><span class="dots"></span><button aria-label="Cerrar">${icon('close', 12)}</button><button aria-label="Personalizar">${icon('wrench', 14)}</button></span>
    <button class="recent" aria-label="Comandos recientes">${icon('line', 17)}${icon('caret', 5)}</button>
    <label for="cmd"><b>LINEA</b>Precise punto siguiente o [</label><button class="opt"><i>C</i>errar</button><span> </span><button class="opt">des<i>H</i>acer</button><span>]:</span>
    <input id="cmd" type="text">
    <button class="more" aria-label="Historial">${icon('up', 7)}</button>
  </div>
`);

define('layout-tabs', `
  :host { display: flex; height: 18px; background: linear-gradient(#f7f7f7, #e7e7e7); border-bottom: 1px solid #8a8a8a; font-family: "Roboto", "Liberation Sans", sans-serif; color: #333; padding-left: 2px; }
  .nav { width: 14px; border-right: 1px solid #aaa; }
  .tab { position: relative; height: 17px; width: 83px; background: #fbfbfb; border-top: 1px solid #888; }
  .tab::after { content: ""; position: absolute; right: 0; top: 0; bottom: 0; width: 1px; background: #666; transform: skewX(-20deg); }
  .tab.on { width: 60px; height: 17px; background: #1f2831; color: #fff; border: 0; font-weight: 500; clip-path: polygon(0 0, 100% 0, 90% 100%, 10% 100%); }
  .tab.on::after { display: none; }
`, () => ['first', 'prev', 'next', 'last'].map(n => `<button class="nav" aria-label="${n}">${icon(n, 12)}</button>`).join('') +
  '<button class="tab on">Modelo</button><button class="tab">Presentación1</button><button class="tab">Presentación2</button>');

define('status-bar', `
  :host { display: flex; align-items: stretch; height: 22px; background: linear-gradient(#8a8a8a, #777); font-family: "Roboto", sans-serif; color: #222; border-top: 1px solid #777; }
  .coords { flex: none; width: 168px; padding: 5px 0 0 12px; background: linear-gradient(#8c8c8c, #808080); border-right: 1px solid #666; }
  .toggles { display: flex; width: 322px; flex: none; }
  .toggles button { flex: 1; }
  button { background: linear-gradient(#c4c4c4, #9d9d9d); border-right: 1px solid #777; }
  button.on { background: linear-gradient(#e6f4fa, #a5d6e6 50%, #c9eaf3); }
  .right { display: flex; margin-left: auto; }
  .right button { width: 21px; }
  .right .space { width: 51px; }
  .right .scale { width: 50px; gap: 4px; }
  .right .bulb { width: 27px; margin-left: 4px; background: linear-gradient(#aaa, #c9c9c9); border: 2px solid #777; }
  .right .end { width: 16px; }
  .gap { width: 6px; } .gap.wide { width: 12px; }
`, () => {
  const t = ['infer', 'snap*', 'grid*', 'ortho*', 'polar', 'osnap*', 'osnap3*', 'otrack*', 'ducs', 'dyn', 'lwt', 'transp*', 'quick', 'cycle', 'plus'];
  const b = (n, s = 17) => `<button aria-label="${n}">${icon(n, s)}</button>`;
  return `<span class="coords">-61.0000, -43.3249, 0.0000</span>
  <div class="toggles">${t.map(n => `<button aria-label="${n.replace('*', '')}" class="${n.endsWith('*') ? 'on' : ''}">${icon(n.replace('*', ''), 17)}</button>`).join('')}</div>
  <div class="right"><button class="space">MODELO</button>${b('model')}${b('layouts')}<span class="gap wide"></span>
  <button class="scale">${icon('anno', 16)}<span>1:1</span>${icon('caret', 7)}</button>${b('annolamp')}${b('annoauto')}<span class="gap"></span>
  ${b('gear')}${b('lock')}${b('hardware')}<button class="bulb" aria-label="Aislar objetos">${icon('bulb', 17)}</button><button class="end" aria-label="Menú">${icon('caret', 6)}</button></div>`;
});

define('cad-app', `
  :host { display: flex; flex-direction: column; position: relative; min-height: 100vh; border: solid #000; border-width: 5px 2px 6px; background: #000; }
  header { position: relative; border-top: 1px solid #666; border-bottom: 5px solid #6c6c6c; }
  drawing-view { flex: 1; }
  .edge { height: 6px; background: #e6e6e6; border-bottom: 1px solid #888; }
`, () => `
  <header><app-button></app-button><title-bar></title-bar><menu-tabs></menu-tabs><cad-ribbon></cad-ribbon></header>
  <drawing-view><command-line></command-line></drawing-view>
  <layout-tabs></layout-tabs>
  <status-bar></status-bar>
  <div class="edge"></div>
`);
</script>
</body>
</html>
